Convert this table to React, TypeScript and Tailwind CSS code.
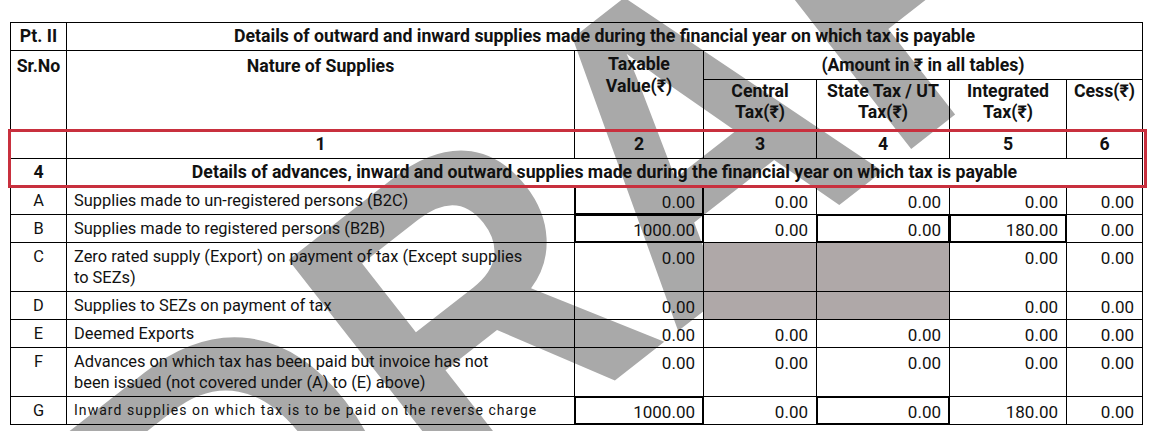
type Row = {
  id: string
  label: React.ReactNode
  vals: (string | null)[]
  tall?: boolean
  small?: boolean
  thick?: number[]
}

const rows: Row[] = [
  { id: 'A', label: 'Supplies made to un-registered persons (B2C)', vals: ['0.00', '0.00', '0.00', '0.00', '0.00'], thick: [0] },
  { id: 'B', label: 'Supplies made to registered persons (B2B)', vals: ['1000.00', '0.00', '0.00', '180.00', '0.00'], thick: [0, 2, 3] },
  {
    id: 'C',
    label: (
      <>
        Zero rated supply (Export) on payment of tax (Except supplies
        <br />
        to SEZs)
      </>
    ),
    vals: ['0.00', null, null, '0.00', '0.00'],
    tall: true,
  },
  { id: 'D', label: 'Supplies to SEZs on payment of tax', vals: ['0.00', null, null, '0.00', '0.00'] },
  { id: 'E', label: 'Deemed Exports', vals: ['0.00', '0.00', '0.00', '0.00', '0.00'] },
  {
    id: 'F',
    label: (
      <>
        Advances on which tax has been paid but invoice has not
        <br />
        been issued (not covered under (A) to (E) above)
      </>
    ),
    vals: ['0.00', '0.00', '0.00', '0.00', '0.00'],
    tall: true,
  },
  {
    id: 'G',
    label: 'Inward supplies on which tax is to be paid on the reverse charge',
    vals: ['1000.00', '0.00', '0.00', '180.00', '0.00'],
    small: true,
    thick: [0, 2],
  },
]

export default function App() {
  return (
    <div className="relative h-[431px] w-[1162px] overflow-hidden bg-white pl-[10px] pt-[22px] font-['Roboto',sans-serif] text-[16.4px] text-[#111]">
      {/* DRAFT watermark */}
      <div className="pointer-events-none absolute left-[655px] top-[160px] -translate-x-1/2 -translate-y-1/2 -rotate-38 scale-x-90 whitespace-nowrap font-['Liberation_Sans',sans-serif] text-[430px] font-bold leading-none text-[#a9a9a9]">
        DRAFT
      </div>

      <table className="relative table-fixed border-collapse">
        <colgroup>
          <col className="w-[56px]" />
          <col className="w-[508px]" />
          <col className="w-[129px]" />
          <col className="w-[113px]" />
          <col className="w-[133px]" />
          <col className="w-[117px]" />
          <col className="w-[76px]" />
        </colgroup>
        <thead className="text-[17.7px] font-bold">
          <tr className="h-[28px]">
            <td className="border border-black text-center">Pt. II</td>
            <td colSpan={6} className="border border-black text-center">
              Details of outward and inward supplies made during the financial year on which tax is payable
            </td>
          </tr>
          <tr className="h-[29px]">
            <td rowSpan={2} className="border border-black pt-[2px] text-center align-top">Sr.No</td>
            <td rowSpan={2} className="border border-black pt-[2px] text-center align-top">Nature of Supplies</td>
            <td rowSpan={2} className="border border-black pt-[2px] text-center align-top leading-[22px]">
              Taxable
              <br />
              Value(₹)
            </td>
            <td colSpan={4} className="border border-black text-center">(Amount in ₹ in all tables)</td>
          </tr>
          <tr className="h-[51px]">
            <td className="border border-black pt-[1px] text-center align-top leading-[21px]">
              Central
              <br />
              Tax(₹)
            </td>
            <td className="border border-black pt-[1px] text-center align-top leading-[21px]">
              State Tax / UT
              <br />
              Tax(₹)
            </td>
            <td className="border border-black pt-[1px] text-center align-top leading-[21px]">
              Integrated
              <br />
              Tax(₹)
            </td>
            <td className="border border-black pt-[1px] text-center align-top leading-[21px]">Cess(₹)</td>
          </tr>
          <tr className="h-[27px]">
            <td className="border border-black"></td>
            {['1', '2', '3', '4', '5', '6'].map(n => (
              <td key={n} className="border border-black text-center">{n}</td>
            ))}
          </tr>
          <tr className="h-[28px]">
            <td className="border border-black text-center">4</td>
            <td colSpan={6} className="whitespace-nowrap border border-black text-center">
              Details of advances, inward and outward supplies made during the financial year on which tax is payable
            </td>
          </tr>
        </thead>
        <tbody className="leading-[21px]">
          {rows.map(row => (
            <tr key={row.id} className={row.tall ? 'h-[49px]' : 'h-[28px]'}>
              <td className="border border-black pt-[3px] text-center align-top">{row.id}</td>
              <td
                className={`whitespace-nowrap border border-black pl-[7px] pt-[3px] align-top ${
                  row.small ? 'text-[14px] tracking-[1.05px]' : ''
                }`}
              >
                {row.label}
              </td>
              {row.vals.map((v, i) =>
                v === null ? (
                  <td key={i} className="border border-black bg-[#afa8a8]"></td>
                ) : (
                  <td
                    key={i}
                    className={`border border-black pr-2 pt-[5px] text-right align-top text-[17px] ${
                      row.thick?.includes(i) ? 'shadow-[inset_0_0_0_1px_#000]' : ''
                    }`}
                  >
                    {v}
                  </td>
                )
              )}
            </tr>
          ))}
        </tbody>
      </table>

      {/* highlighted rows */}
      <div className="pointer-events-none absolute left-[8px] top-[129px] h-[59px] w-[1139px] border-[3px] border-[#c8303e]"></div>
    </div>
  )
}
